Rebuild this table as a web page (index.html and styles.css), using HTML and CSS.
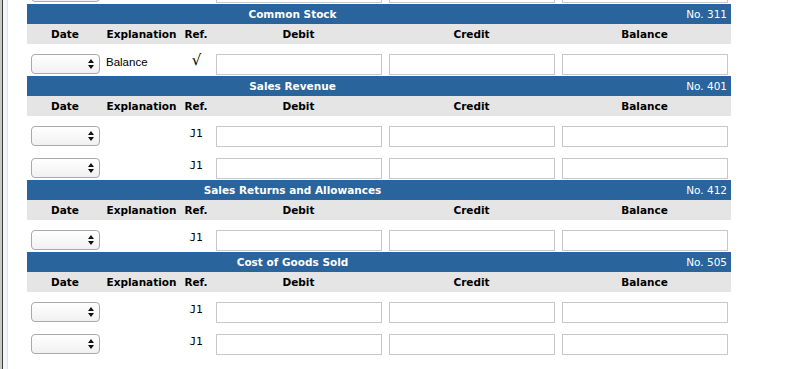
FILE: index.html
```html
<!DOCTYPE html>
<html lang="en">
<head>
<meta charset="utf-8">
<title>General Ledger</title>
<link rel="stylesheet" href="styles.css">
</head>
<body>
<div class="frame">
  <div class="edge"></div>
  <main class="ledger">

    <!-- tail of the account above -->
    <div class="row">
      <div class="cell"><span class="select"><svg class="arrows" viewBox="0 0 6 10" width="6" height="10"><path d="M3 0 L6 4 L0 4 Z M0 6 L6 6 L3 10 Z"/></svg></span></div>
      <div class="cell"></div>
      <div class="cell ref"></div>
      <div class="cell money"><span class="input"></span></div>
      <div class="cell money"><span class="input"></span></div>
      <div class="cell money"><span class="input"></span></div>
    </div>

    <section class="account">
      <div class="bar"><span class="title">Common Stock</span><span class="no">No. 311</span></div>
      <div class="head"><span>Date</span><span>Explanation</span><span>Ref.</span><span>Debit</span><span>Credit</span><span>Balance</span></div>
      <div class="row">
        <div class="cell"><span class="select"><svg class="arrows" viewBox="0 0 6 10" width="6" height="10"><path d="M3 0 L6 4 L0 4 Z M0 6 L6 6 L3 10 Z"/></svg></span></div>
        <div class="cell text">Balance</div>
        <div class="cell ref check">√</div>
        <div class="cell money"><span class="input"></span></div>
        <div class="cell money"><span class="input"></span></div>
        <div class="cell money"><span class="input"></span></div>
      </div>
    </section>

    <section class="account">
      <div class="bar"><span class="title">Sales Revenue</span><span class="no">No. 401</span></div>
      <div class="head"><span>Date</span><span>Explanation</span><span>Ref.</span><span>Debit</span><span>Credit</span><span>Balance</span></div>
      <div class="row">
        <div class="cell"><span class="select"><svg class="arrows" viewBox="0 0 6 10" width="6" height="10"><path d="M3 0 L6 4 L0 4 Z M0 6 L6 6 L3 10 Z"/></svg></span></div>
        <div class="cell text"></div>
        <div class="cell ref">J1</div>
        <div class="cell money"><span class="input"></span></div>
        <div class="cell money"><span class="input"></span></div>
        <div class="cell money"><span class="input"></span></div>
      </div>
      <div class="row">
        <div class="cell"><span class="select"><svg class="arrows" viewBox="0 0 6 10" width="6" height="10"><path d="M3 0 L6 4 L0 4 Z M0 6 L6 6 L3 10 Z"/></svg></span></div>
        <div class="cell text"></div>
        <div class="cell ref">J1</div>
        <div class="cell money"><span class="input"></span></div>
        <div class="cell money"><span class="input"></span></div>
        <div class="cell money"><span class="input"></span></div>
      </div>
    </section>

    <section class="account">
      <div class="bar"><span class="title">Sales Returns and Allowances</span><span class="no">No. 412</span></div>
      <div class="head"><span>Date</span><span>Explanation</span><span>Ref.</span><span>Debit</span><span>Credit</span><span>Balance</span></div>
      <div class="row">
        <div class="cell"><span class="select"><svg class="arrows" viewBox="0 0 6 10" width="6" height="10"><path d="M3 0 L6 4 L0 4 Z M0 6 L6 6 L3 10 Z"/></svg></span></div>
        <div class="cell text"></div>
        <div class="cell ref">J1</div>
        <div class="cell money"><span class="input"></span></div>
        <div class="cell money"><span class="input"></span></div>
        <div class="cell money"><span class="input"></span></div>
      </div>
    </section>

    <section class="account">
      <div class="bar"><span class="title">Cost of Goods Sold</span><span class="no">No. 505</span></div>
      <div class="head"><span>Date</span><span>Explanation</span><span>Ref.</span><span>Debit</span><span>Credit</span><span>Balance</span></div>
      <div class="row">
        <div class="cell"><span class="select"><svg class="arrows" viewBox="0 0 6 10" width="6" height="10"><path d="M3 0 L6 4 L0 4 Z M0 6 L6 6 L3 10 Z"/></svg></span></div>
        <div class="cell text"></div>
        <div class="cell ref">J1</div>
        <div class="cell money"><span class="input"></span></div>
        <div class="cell money"><span class="input"></span></div>
        <div class="cell money"><span class="input"></span></div>
      </div>
      <div class="row">
        <div class="cell"><span class="select"><svg class="arrows" viewBox="0 0 6 10" width="6" height="10"><path d="M3 0 L6 4 L0 4 Z M0 6 L6 6 L3 10 Z"/></svg></span></div>
        <div class="cell text"></div>
        <div class="cell ref">J1</div>
        <div class="cell money"><span class="input"></span></div>
        <div class="cell money"><span class="input"></span></div>
        <div class="cell money"><span class="input"></span></div>
      </div>
    </section>

  </main>
</div>
</body>
</html>
```

FILE: styles.css
```css
html, body {
  margin: 0;
  padding: 0;
  background: #fff;
  height: 100%;
  overflow: hidden;
}

.frame {
  display: flex;
  height: 369px;
}

/* window edge on the left */
.edge {
  flex: 0 0 8px;
  background: linear-gradient(to right,
    #c9c9c9 0 2px,
    #3c3c3c 2px 3px,
    #f2f6fa 3px 7px,
    #dde3ea 7px 8px);
}

.ledger {
  margin-left: 19px;
  margin-top: -28px;
  width: 704px;
  font-family: "DejaVu Sans", Verdana, sans-serif;
  color: #000;
}

.bar,
.head,
.row {
  display: grid;
  grid-template-columns: 76px 77px 32px 173px 173px 173px;
}

.bar {
  height: 20px;
  line-height: 20px;
  background: #29649c;
  color: #fff;
  font-size: 10.5px;
}

.bar .title {
  grid-column: 1 / 6;
  text-align: center;
  font-weight: bold;
}

.bar .no {
  text-align: right;
  padding-right: 4px;
}

.head {
  height: 20px;
  line-height: 21px;
  background: #e5e5e5;
  font-size: 10.5px;
  font-weight: bold;
  text-align: center;
}

.row {
  height: 32px;
  box-sizing: border-box;
  padding-top: 10px;
}

.cell {
  font-family: "Liberation Sans", Arial, sans-serif;
  font-size: 11.5px;
  line-height: 14px;
  padding-left: 4px;
}

.cell.text {
  padding-left: 3px;
  padding-top: 1px;
}

.cell.ref {
  padding-left: 0;
  text-align: center;
  font-family: "DejaVu Sans Mono", monospace;
  font-size: 11px;
  padding-top: 1px;
}

.cell.check {
  font-family: "DejaVu Sans", sans-serif;
  font-size: 15px;
  line-height: 13px;
  padding-top: 0;
  padding-left: 1px;
}

.cell.money {
  padding: 0 3px 0 4px;
}

.input {
  display: block;
  height: 21px;
  box-sizing: border-box;
  border: 1px solid #c8c8c8;
  background: #fff;
}

/* rounded dropdown control */
.select {
  display: flex;
  align-items: center;
  justify-content: flex-end;
  width: 69px;
  height: 20px;
  box-sizing: border-box;
  border: 1px solid #a9a9a9;
  border-radius: 4px;
  background: linear-gradient(#ffffff, #f1f1f1);
  padding-right: 5px;
}

.arrows {
  display: block;
  fill: #111;
}
```
